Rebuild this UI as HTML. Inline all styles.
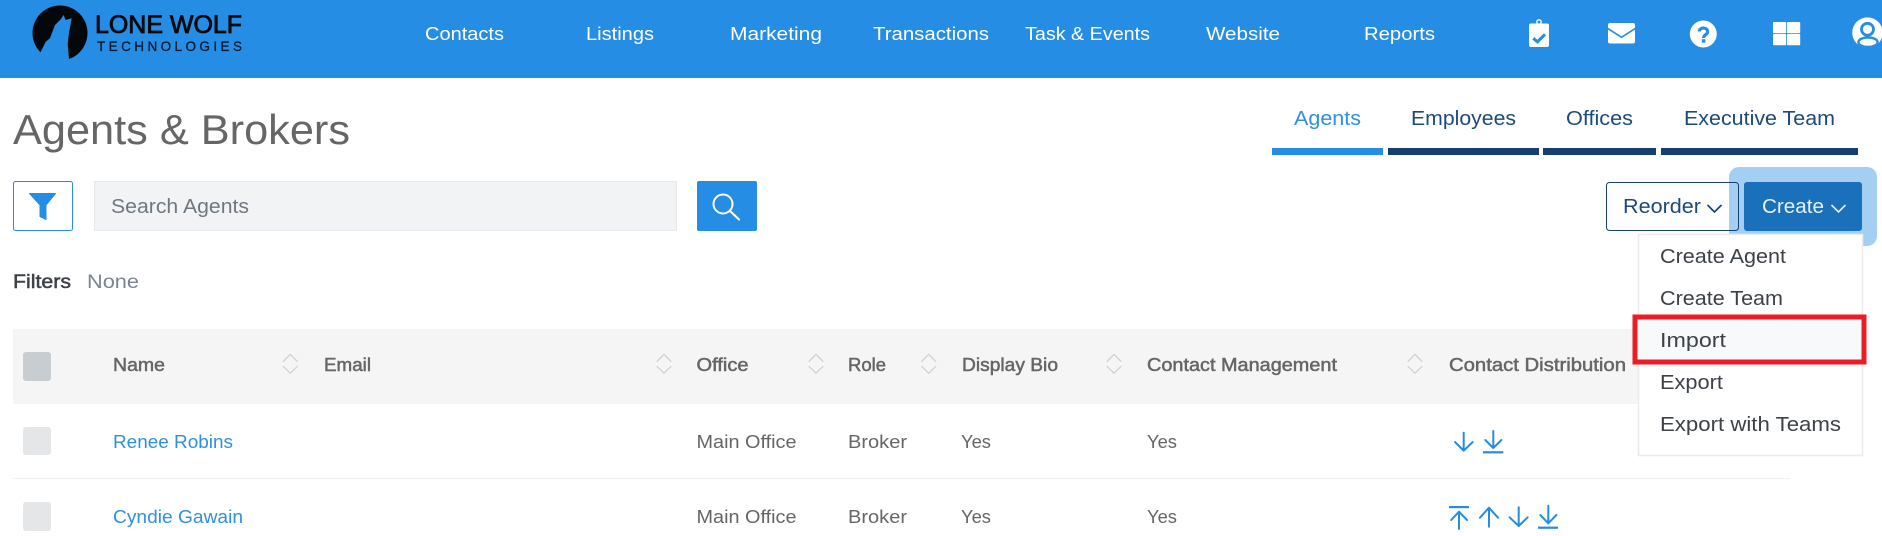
<!DOCTYPE html>
<html lang="en">
<head>
<meta charset="utf-8">
<title>Agents &amp; Brokers</title>
<style>
html,body{margin:0;padding:0;width:1882px;height:536px;overflow:hidden;background:#fff}
svg{display:block}
text{font-family:"Liberation Sans",Arial,sans-serif}
.nav{font-size:18.5px;fill:#fff}
.tab{font-size:20px;fill:#1c4a7c}
.dd{font-size:20px;fill:#3d4248}
.th{font-size:18px;fill:#666;stroke:#666;stroke-width:.5px}
.td{font-size:18px;fill:#666}
.lnk{font-size:18px;fill:#2f8fe5}
.s{fill:none;stroke:#cfcfcf;stroke-width:1.2}
.a{fill:none;stroke:#258ce3;stroke-width:2;stroke-linecap:round;stroke-linejoin:round}
</style>
</head>
<body>
<svg width="1882" height="536" viewBox="0 0 1882 536" xmlns="http://www.w3.org/2000/svg">
<!-- header -->
<rect x="0" y="0" width="1882" height="78" fill="#258de3"/>
<circle cx="60" cy="33" r="27.5" fill="#05080b"/>
<path d="M40 53.3 45.7 41.7 50 38.3 55 25 61 19 63.5 15 65.7 20 71.7 18.3 69 33 67.7 43.3 69 59.5 69 64 50 64Z" fill="#258de3"/>
<text x="95" y="33" font-size="25" fill="#05080b" stroke="#05080b" stroke-width=".8" textLength="147" lengthAdjust="spacingAndGlyphs">LONE WOLF</text>
<text x="97" y="51" font-size="13.5" fill="#081a2c" stroke="#081a2c" stroke-width=".3" textLength="145" lengthAdjust="spacing">TECHNOLOGIES</text>

<text class="nav" x="425" y="40" textLength="79" lengthAdjust="spacingAndGlyphs">Contacts</text>
<text class="nav" x="586" y="40" textLength="68" lengthAdjust="spacingAndGlyphs">Listings</text>
<text class="nav" x="730" y="40" textLength="92" lengthAdjust="spacingAndGlyphs">Marketing</text>
<text class="nav" x="873" y="40" textLength="116" lengthAdjust="spacingAndGlyphs">Transactions</text>
<text class="nav" x="1025" y="40" textLength="125" lengthAdjust="spacingAndGlyphs">Task &amp; Events</text>
<text class="nav" x="1206" y="40" textLength="74" lengthAdjust="spacingAndGlyphs">Website</text>
<text class="nav" x="1364" y="40" textLength="71" lengthAdjust="spacingAndGlyphs">Reports</text>

<!-- clipboard -->
<circle cx="1539" cy="22" r="2.2" fill="none" stroke="#fff" stroke-width="1.4"/>
<rect x="1529" y="23.5" width="20" height="23.5" rx="2" fill="#fff"/>
<path d="M1533.3 38.3 1537.5 41.8 1545 34.3" fill="none" stroke="#258de3" stroke-width="3"/>
<!-- mail -->
<rect x="1608" y="23" width="27" height="20.5" rx="2" fill="#fff"/>
<path d="M1607.5 28.3 1621.5 37.3 1635.5 28.3" fill="none" stroke="#258de3" stroke-width="1.6"/>
<!-- help -->
<circle cx="1703.3" cy="34" r="13.5" fill="#fff"/>
<path d="M1699.3 31.5C1699.3 26.8 1707.6 27 1707.6 31.7 1707.6 34.8 1703.6 34.6 1703.6 38" fill="none" stroke="#258de3" stroke-width="3.2"/>
<rect x="1701.8" y="39.2" width="3.6" height="3.4" fill="#258de3"/>
<!-- grid -->
<rect x="1773" y="22" width="13.2" height="11.2" rx=".8" fill="#fff"/>
<rect x="1787" y="22" width="13.2" height="11.2" rx=".8" fill="#fff"/>
<rect x="1773" y="34" width="13.2" height="11.2" rx=".8" fill="#fff"/>
<rect x="1787" y="34" width="13.2" height="11.2" rx=".8" fill="#fff"/>
<!-- user -->
<circle cx="1867.5" cy="32.7" r="15.3" fill="#fff"/>
<circle cx="1867.5" cy="29.3" r="6" fill="#fff" stroke="#258de3" stroke-width="2.8"/>
<ellipse cx="1868" cy="42.2" rx="9.6" ry="4.8" fill="#fff" stroke="#258de3" stroke-width="2.4"/>

<!-- title -->
<text x="13" y="144" font-size="42" fill="#666" textLength="337" lengthAdjust="spacingAndGlyphs">Agents &amp; Brokers</text>

<!-- tabs -->
<text class="tab" x="1294" y="125" textLength="67" lengthAdjust="spacingAndGlyphs" style="fill:#2f8fe5">Agents</text>
<text class="tab" x="1411" y="125" textLength="105" lengthAdjust="spacingAndGlyphs">Employees</text>
<text class="tab" x="1566" y="125" textLength="67" lengthAdjust="spacingAndGlyphs">Offices</text>
<text class="tab" x="1684" y="125" textLength="151" lengthAdjust="spacingAndGlyphs">Executive Team</text>
<rect x="1272" y="148" width="111" height="7" fill="#258de3"/>
<rect x="1388" y="148" width="151" height="7" fill="#153f70"/>
<rect x="1543" y="148" width="113" height="7" fill="#153f70"/>
<rect x="1661" y="148" width="197" height="7" fill="#153f70"/>

<!-- filter button -->
<rect x="13.5" y="181.5" width="59" height="49" rx="2" fill="#fff" stroke="#258de3"/>
<path d="M29.5 193.5H55.5L46 205V219.5L40 216.5V205Z" fill="#258de3" stroke="#258de3" stroke-width="1" stroke-linejoin="round"/>
<!-- search -->
<rect x="94.5" y="181.5" width="582" height="49" fill="#f2f3f5" stroke="#e8e9eb"/>
<text x="111" y="213" font-size="20" fill="#6f7880" textLength="138" lengthAdjust="spacingAndGlyphs">Search Agents</text>
<rect x="697" y="181" width="60" height="50" rx="2" fill="#258de3"/>
<circle cx="723" cy="204" r="9.5" fill="none" stroke="#fff" stroke-width="2"/>
<path d="M730 211 739 219.5" stroke="#fff" stroke-width="2.2" stroke-linecap="round"/>

<!-- reorder/create -->
<rect x="1729" y="167" width="148" height="79" rx="10" fill="#a3cff3"/>
<rect x="1606.5" y="182.5" width="132" height="48" rx="3" fill="none" stroke="#153f70"/>
<text x="1623" y="213" font-size="20" fill="#1c4a7c" textLength="78" lengthAdjust="spacingAndGlyphs">Reorder</text>
<path d="M1707.5 205 1714.5 212 1721.5 205" fill="none" stroke="#153f70" stroke-width="1.6"/>
<rect x="1744" y="182" width="118" height="49" rx="3" fill="#1a70bb"/>
<text x="1762" y="213" font-size="20" fill="#e6f1fa" textLength="62" lengthAdjust="spacingAndGlyphs">Create</text>
<path d="M1831.5 205 1838.5 212 1845.5 205" fill="none" stroke="#e6f1fa" stroke-width="1.6"/>

<!-- filters -->
<text x="13" y="288" font-size="19" fill="#3d4248" stroke="#3d4248" stroke-width=".5" textLength="58" lengthAdjust="spacingAndGlyphs">Filters</text>
<text x="87" y="288" font-size="19" fill="#7a8590" textLength="52" lengthAdjust="spacingAndGlyphs">None</text>

<!-- table header -->
<rect x="13" y="329" width="1777" height="75" fill="#f5f5f5"/>
<rect x="23" y="352" width="28" height="29" rx="3" fill="#c8cdd1"/>
<text class="th" x="113" y="371" textLength="52" lengthAdjust="spacingAndGlyphs">Name</text>
<text class="th" x="324" y="371" textLength="47" lengthAdjust="spacingAndGlyphs">Email</text>
<text class="th" x="696.5" y="371" textLength="52" lengthAdjust="spacingAndGlyphs">Office</text>
<text class="th" x="848" y="371" textLength="38" lengthAdjust="spacingAndGlyphs">Role</text>
<text class="th" x="962" y="371" textLength="96" lengthAdjust="spacingAndGlyphs">Display Bio</text>
<text class="th" x="1147" y="371" textLength="190" lengthAdjust="spacingAndGlyphs">Contact Management</text>
<text class="th" x="1449" y="371" textLength="177" lengthAdjust="spacingAndGlyphs">Contact Distribution</text>
<path class="s" d="M283 361.7 290.3 354.3 297.6 361.7M283 366 290.3 373.3 297.6 366"/>
<path class="s" d="M656.7 361.7 664 354.3 671.3 361.7M656.7 366 664 373.3 671.3 366"/>
<path class="s" d="M808.7 361.7 816 354.3 823.3 361.7M808.7 366 816 373.3 823.3 366"/>
<path class="s" d="M921.4 361.7 928.7 354.3 936 361.7M921.4 366 928.7 373.3 936 366"/>
<path class="s" d="M1106.7 361.7 1114 354.3 1121.3 361.7M1106.7 366 1114 373.3 1121.3 366"/>
<path class="s" d="M1407.7 361.7 1415 354.3 1422.3 361.7M1407.7 366 1415 373.3 1422.3 366"/>

<!-- rows -->
<rect x="23" y="427" width="28" height="28" rx="3" fill="#e5e6e8"/>
<text class="lnk" x="113" y="448" textLength="120" lengthAdjust="spacingAndGlyphs">Renee Robins</text>
<text class="td" x="696.5" y="448" textLength="100" lengthAdjust="spacingAndGlyphs">Main Office</text>
<text class="td" x="848" y="448" textLength="59" lengthAdjust="spacingAndGlyphs">Broker</text>
<text class="td" x="961" y="448" textLength="30" lengthAdjust="spacingAndGlyphs">Yes</text>
<text class="td" x="1147" y="448" textLength="30" lengthAdjust="spacingAndGlyphs">Yes</text>
<rect x="13" y="478" width="1777" height="1" fill="#f2f2f2"/>
<rect x="23" y="502" width="28" height="29" rx="3" fill="#e5e6e8"/>
<text class="lnk" x="113" y="523" textLength="130" lengthAdjust="spacingAndGlyphs">Cyndie Gawain</text>
<text class="td" x="696.5" y="523" textLength="100" lengthAdjust="spacingAndGlyphs">Main Office</text>
<text class="td" x="848" y="523" textLength="59" lengthAdjust="spacingAndGlyphs">Broker</text>
<text class="td" x="961" y="523" textLength="30" lengthAdjust="spacingAndGlyphs">Yes</text>
<text class="td" x="1147" y="523" textLength="30" lengthAdjust="spacingAndGlyphs">Yes</text>

<!-- arrows -->
<path class="a" d="M1463.7 432.7V450.7M1455 442 1463.7 450.7 1472.7 442"/>
<path class="a" d="M1493.3 431V448M1485.3 440 1493.3 448 1501.4 440"/>
<rect x="1483" y="451.2" width="20.3" height="2.2" fill="#258ce3"/>
<rect x="1449" y="506" width="20" height="2.2" fill="#258ce3"/>
<path class="a" d="M1459 511.7V529M1451.2 520 1459 511.7 1467 520"/>
<path class="a" d="M1489 507.7V526.7M1480 517.7 1489 507.7 1498 517.7"/>
<path class="a" d="M1518.7 507.3V526M1509.6 517.3 1518.7 526 1527.7 517.3"/>
<path class="a" d="M1548.3 505.7V523.3M1540.3 515 1548.3 523.3 1556.4 515"/>
<rect x="1538" y="526.6" width="20" height="2.2" fill="#258ce3"/>

<!-- dropdown -->
<rect x="1638.5" y="234.5" width="224" height="221" fill="#fff" stroke="#ececec" stroke-width="1.6"/>
<text class="dd" x="1660" y="263" textLength="126" lengthAdjust="spacingAndGlyphs">Create Agent</text>
<text class="dd" x="1660" y="305" textLength="123" lengthAdjust="spacingAndGlyphs">Create Team</text>
<rect x="1635" y="317" width="229" height="45" fill="#f8f9fa" stroke="#ed1c24" stroke-width="5"/>
<text class="dd" x="1660" y="347" textLength="66" lengthAdjust="spacingAndGlyphs">Import</text>
<text class="dd" x="1660" y="389" textLength="63" lengthAdjust="spacingAndGlyphs">Export</text>
<text class="dd" x="1660" y="431" textLength="181" lengthAdjust="spacingAndGlyphs">Export with Teams</text>
</svg>
</body>
</html>
